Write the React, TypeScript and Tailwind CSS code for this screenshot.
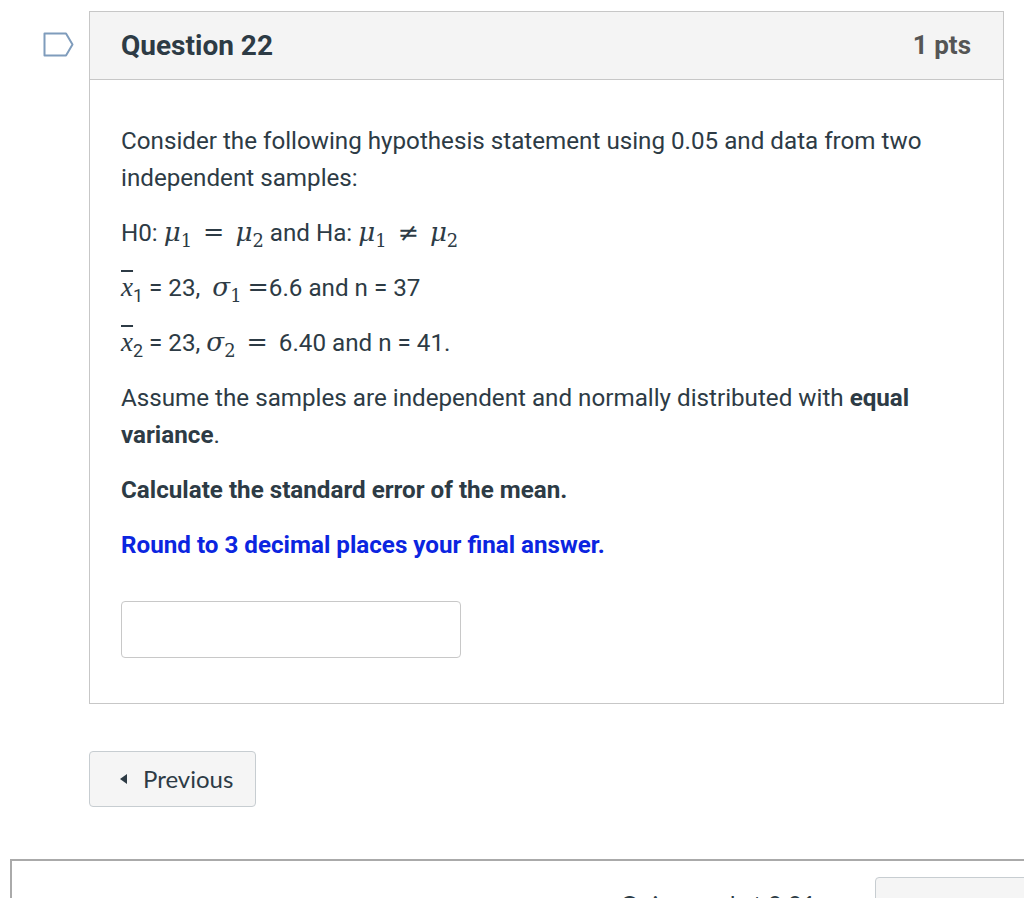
import React from "react";

const serif = "'DejaVu Serif', 'Liberation Serif', serif";
const M = ({ children }: { children: React.ReactNode }) => (
  <span className="text-[1.08em] leading-none" style={{ fontFamily: serif, fontStyle: "italic" }}>{children}</span>
);
const Sub = ({ children, sans }: { children: React.ReactNode; sans?: boolean }) => (
  <span className="align-[-6px] text-[0.74em] leading-none" style={sans ? undefined : { fontFamily: serif, fontStyle: "normal" }}>{children}</span>
);
const Eq = ({ c }: { c: string }) => (
  <span className="mx-[11px] text-[1.05em] leading-none" style={{ fontFamily: serif }}>{c}</span>
);
const XBar = () => (
  <span className="overline decoration-[1.5px] text-[1.12em] leading-none" style={{ fontFamily: "'Liberation Serif', serif", fontStyle: "italic" }}>x</span>
);

export default function App() {
  return (
    <div className="w-[1024px] h-[898px] overflow-hidden bg-white text-[#2d3b45]" style={{ fontFamily: "Roboto, 'Liberation Sans', sans-serif" }}>
      <div className="flex pt-[11px]">
        <div className="w-[89px] shrink-0 pl-[43px] pt-[21px]">
          <svg width="32" height="26" viewBox="0 0 32 26">
            <path d="M1.5 1.5 H23 L29.5 12.5 L23 23.5 H1.5 Z" fill="none" stroke="#7f9cbc" strokeWidth="2" strokeLinejoin="round" />
          </svg>
        </div>
        <div className="w-[915px] border border-[#c7c7c7]">
          <div className="h-[68px] bg-[#f4f4f4] border-b border-[#c7c7c7] flex items-center justify-between pl-[31px] pr-[32px]">
            <span className="text-[28px] font-bold text-[#2d3b45]">Question 22</span>
            <span className="text-[26px] font-bold text-[#555555]">1 pts</span>
          </div>
          <div className="pl-[31px] pr-[31px] pt-[43px] pb-[45px] text-[24.2px] leading-[37px] flex flex-col gap-[18px]">
            <p>Consider the following hypothesis statement using 0.05 and data from two independent samples:</p>
            <p>
              H0: <M>μ</M><Sub>1</Sub><Eq c="=" /><M>μ</M><Sub>2</Sub> and Ha: <M>μ</M><Sub>1</Sub><Eq c="≠" /><M>μ</M><Sub>2</Sub>
            </p>
            <p>
              <XBar /><Sub sans>1</Sub> = 23,&nbsp; <M>σ</M><Sub>1</Sub> <span className="text-[1.05em] leading-none" style={{ fontFamily: serif }}>=</span>6.6 and n = 37
            </p>
            <p>
              <XBar /><Sub sans>2</Sub> = 23, <M>σ</M><Sub>2</Sub><Eq c="=" />6.40 and n = 41.
            </p>
            <p>
              Assume the samples are independent and normally distributed with <b>equal variance</b>.
            </p>
            <p className="font-bold">Calculate the standard error of the mean.</p>
            <p className="font-bold text-[#0b25e0]">Round to 3 decimal places your final answer.</p>
            <div className="mt-[19px] w-[340px] h-[57px] border border-[#c8c8c8] rounded-[4px] bg-white" />
          </div>
        </div>
      </div>
      <div className="pl-[89px] mt-[47px]">
        <button className="w-[167px] h-[56px] bg-[#f5f5f5] border border-[#c7cdd1] rounded-[4px] flex items-center pl-[30px] gap-[15px] text-[#2d3b45] text-[24px]" style={{ fontFamily: "Lato, 'Liberation Sans', sans-serif" }}>
          <svg width="8" height="10" viewBox="0 0 8 10"><path d="M7 0 L0 5 L7 10 Z" fill="#2d3b45" /></svg>
          Previous
        </button>
      </div>
      <div className="ml-[10px] mt-[52px] border-t-2 border-l-2 border-[#aaaaaa] h-[80px] flex items-start pt-[16px] pl-[608px]">
        <span className="mt-[12px] w-[255px] shrink-0 text-[24px] leading-[30px] text-[#2d3b45]" style={{ fontFamily: "Lato, 'Liberation Sans', sans-serif" }}>Quiz saved at 0:01</span>
        <div className="w-[170px] shrink-0 h-[56px] bg-[#f5f5f5] border border-[#c7cdd1] rounded-[4px] pl-[28px] pt-[14px] text-[24px]" style={{ fontFamily: "Lato, 'Liberation Sans', sans-serif" }}>Submit Quiz</div>
      </div>
    </div>
  );
}
